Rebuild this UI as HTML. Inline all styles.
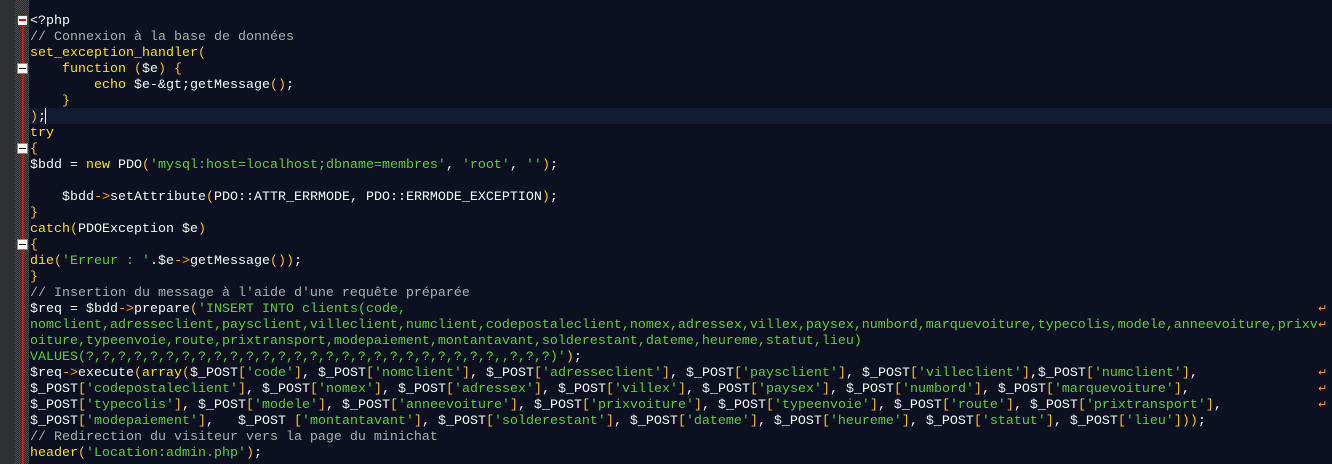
<!DOCTYPE html>
<html><head><meta charset="utf-8"><style>
body{margin:0;width:1332px;height:464px;background:#0c1021;overflow:hidden;position:relative}
#g0{position:absolute;left:0;top:0;width:15px;height:464px;background:#2f3234}
#g1{position:absolute;left:15px;top:0;width:14px;height:464px;background-color:#3a3a3a;background-image:repeating-conic-gradient(#4a4a4a 0 25%,#2c2c2c 0 50%);background-size:2px 2px}
#red{position:absolute;left:22px;top:22px;width:2px;height:442px;background:#e01010}
.fold{position:absolute;left:17px;width:11px;height:11px;background:#fff;border:1px solid #888;box-sizing:border-box}
.fold::after{content:"";position:absolute;left:1px;top:4px;width:7px;height:1px;background:#000}
.fold.r{border-color:#e00}.fold.r::after{background:#e00;height:2px;top:3px}
#cur{position:absolute;left:29px;top:108px;width:1303px;height:16px;background:#131a33}
#caret{position:absolute;left:45px;top:108px;width:1px;height:16px;background:#fff}
pre{position:absolute;left:30px;top:14px;margin:0;font-family:"Liberation Mono",monospace;font-size:13.33px;line-height:16px;color:#f8f8f8;white-space:pre}
.k{color:#fbde2d}.s{color:#61ce3c}.c{color:#aeaeae}.o{color:#ff9d3d}.b{color:#fbbf2d}
.w{position:absolute;left:1318px;color:#ff9d3d;font-family:"DejaVu Sans",sans-serif;font-size:11px}
</style></head><body>
<div id="g0"></div><div id="g1"></div><div id="red"></div>
<div id="cur"></div>
<div class="fold r" style="top:15px"></div>
<div class="fold" style="top:63px"></div>
<div class="fold" style="top:143px"></div>
<div class="fold" style="top:239px"></div>
<pre><span>&lt;?php</span>
<span class="c">// Connexion à la base de données</span>
<span class="k">set_exception_handler</span><span class="b">(</span>
    <span class="k">function</span> <span class="b">(</span>$e<span class="b">)</span> <span class="b">{</span>
        <span class="k">echo</span> $e-&amp;gt;getMessage<span class="b">()</span>;
    <span class="b">}</span>
<span class="b">)</span>;
<span class="k">try</span>
<span class="b">{</span>
$bdd = <span class="k">new</span> PDO<span class="b">(</span><span class="s">'mysql:host=localhost;dbname=membres'</span>, <span class="s">'root'</span>, <span class="s">''</span><span class="b">)</span>;

    $bdd<span class="o">-&gt;</span>setAttribute<span class="b">(</span>PDO::ATTR_ERRMODE, PDO::ERRMODE_EXCEPTION<span class="b">)</span>;
<span class="b">}</span>
<span class="k">catch</span><span class="b">(</span>PDOException $e<span class="b">)</span>
<span class="b">{</span>
<span class="k">die</span><span class="b">(</span><span class="s">'Erreur : '</span>.$e<span class="o">-&gt;</span>getMessage<span class="b">())</span>;
<span class="b">}</span>
<span class="c">// Insertion du message à l'aide d'une requête préparée</span>
$req = $bdd<span class="o">-&gt;</span>prepare<span class="b">(</span><span class="s">'INSERT INTO clients(code,</span>
<span class="s">nomclient,adresseclient,paysclient,villeclient,numclient,codepostaleclient,nomex,adressex,villex,paysex,numbord,marquevoiture,typecolis,modele,anneevoiture,prixv</span>
<span class="s">oiture,typeenvoie,route,prixtransport,modepaiement,montantavant,solderestant,dateme,heureme,statut,lieu)</span>
<span class="s">VALUES(?,?,?,?,?,?,?,?,?,?,?,?,?,?,?,?,?,?,?,?,?,?,?,?,?,?,,?,?,?)'</span><span class="b">)</span>;
$req<span class="o">-&gt;</span>execute<span class="b">(</span><span class="k">array</span><span class="b">(</span>$_POST<span class="b">[</span><span class="s">'code'</span><span class="b">]</span>, $_POST<span class="b">[</span><span class="s">'nomclient'</span><span class="b">]</span>, $_POST<span class="b">[</span><span class="s">'adresseclient'</span><span class="b">]</span>, $_POST<span class="b">[</span><span class="s">'paysclient'</span><span class="b">]</span>, $_POST<span class="b">[</span><span class="s">'villeclient'</span><span class="b">]</span>,$_POST<span class="b">[</span><span class="s">'numclient'</span><span class="b">]</span>,
$_POST<span class="b">[</span><span class="s">'codepostaleclient'</span><span class="b">]</span>, $_POST<span class="b">[</span><span class="s">'nomex'</span><span class="b">]</span>, $_POST<span class="b">[</span><span class="s">'adressex'</span><span class="b">]</span>, $_POST<span class="b">[</span><span class="s">'villex'</span><span class="b">]</span>, $_POST<span class="b">[</span><span class="s">'paysex'</span><span class="b">]</span>, $_POST<span class="b">[</span><span class="s">'numbord'</span><span class="b">]</span>, $_POST<span class="b">[</span><span class="s">'marquevoiture'</span><span class="b">]</span>,
$_POST<span class="b">[</span><span class="s">'typecolis'</span><span class="b">]</span>, $_POST<span class="b">[</span><span class="s">'modele'</span><span class="b">]</span>, $_POST<span class="b">[</span><span class="s">'anneevoiture'</span><span class="b">]</span>, $_POST<span class="b">[</span><span class="s">'prixvoiture'</span><span class="b">]</span>, $_POST<span class="b">[</span><span class="s">'typeenvoie'</span><span class="b">]</span>, $_POST<span class="b">[</span><span class="s">'route'</span><span class="b">]</span>, $_POST<span class="b">[</span><span class="s">'prixtransport'</span><span class="b">]</span>,
$_POST<span class="b">[</span><span class="s">'modepaiement'</span><span class="b">]</span>,   $_POST <span class="b">[</span><span class="s">'montantavant'</span><span class="b">]</span>, $_POST<span class="b">[</span><span class="s">'solderestant'</span><span class="b">]</span>, $_POST<span class="b">[</span><span class="s">'dateme'</span><span class="b">]</span>, $_POST<span class="b">[</span><span class="s">'heureme'</span><span class="b">]</span>, $_POST<span class="b">[</span><span class="s">'statut'</span><span class="b">]</span>, $_POST<span class="b">[</span><span class="s">'lieu'</span><span class="b">]))</span>;
<span class="c">// Redirection du visiteur vers la page du minichat</span>
<span class="k">header</span><span class="b">(</span><span class="s">'Location:admin.php'</span><span class="b">)</span>;</pre>
<div id="caret"></div>
<span class="w" style="top:302px">↵</span>
<span class="w" style="top:318px">↵</span>
<span class="w" style="top:366px">↵</span>
<span class="w" style="top:382px">↵</span>
<span class="w" style="top:398px">↵</span>
</body></html>
